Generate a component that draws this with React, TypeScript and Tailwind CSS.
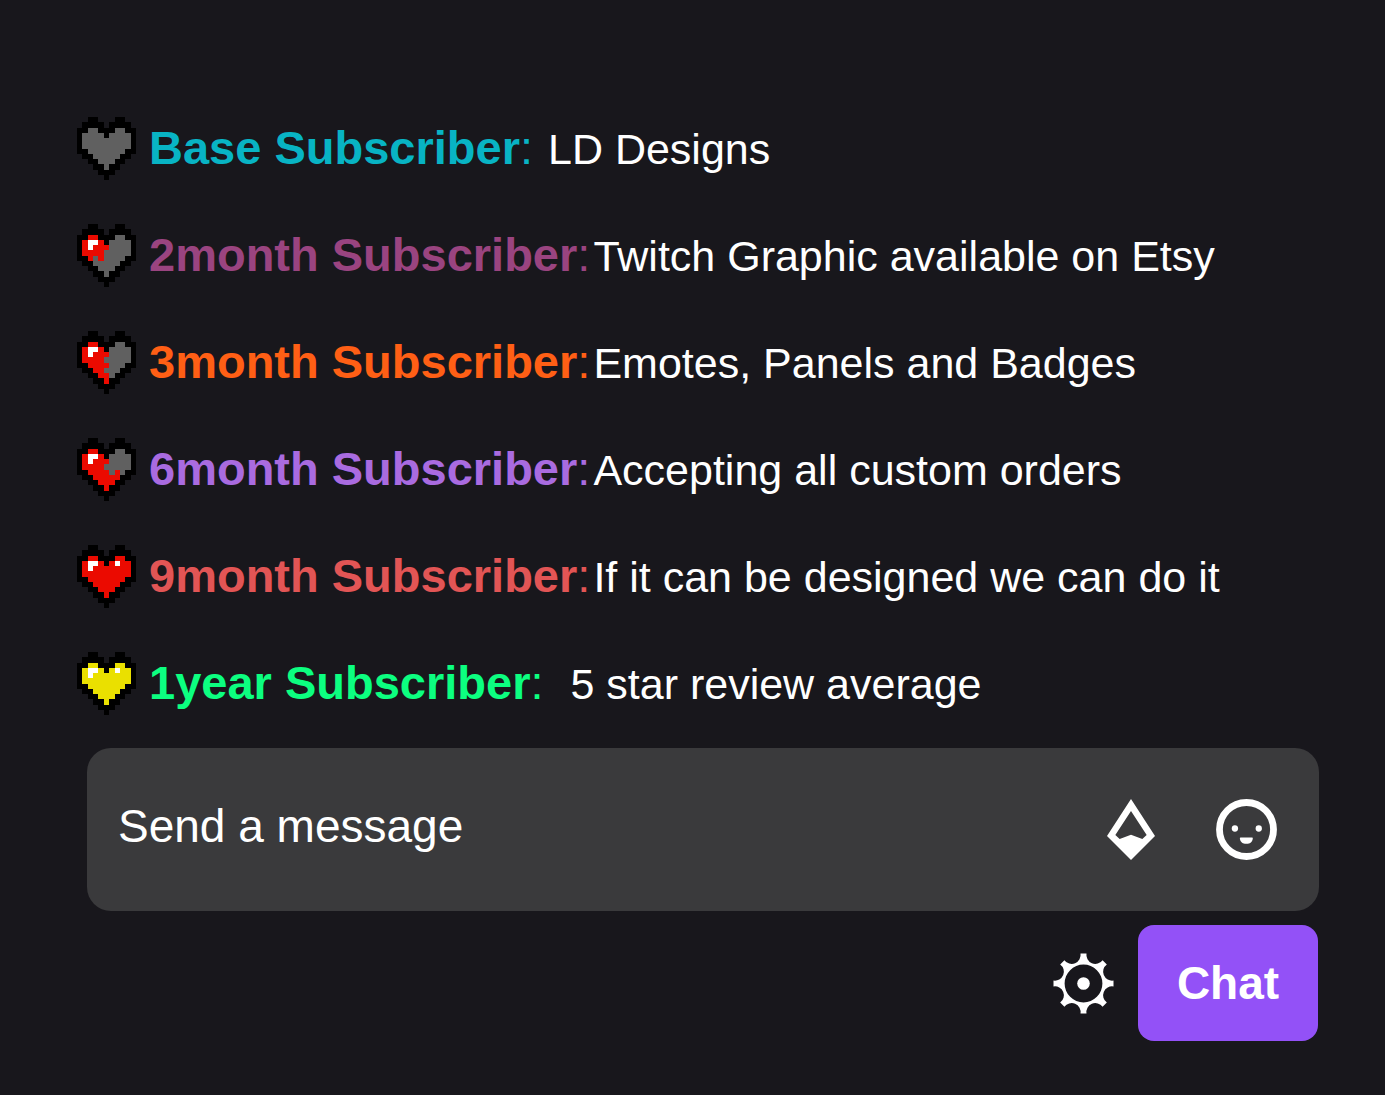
import { useState } from 'react'

interface Message {
  name: string
  nameClass: string
  text: string
  heart: string[]
}

const PIXEL_COLORS: Record<string, string> = {
  '#': '#000000',
  G: '#606060',
  R: '#eb0a00',
  W: '#ffffff',
  Y: '#eae000',
}

const HEART_EMPTY = [
  '..##...##..',
  '.####.####.',
  '##GG###GG##',
  '#GGGG#GGGG#',
  '#GGGGGGGGG#',
  '#GGGGGGGGG#',
  '##GGGGGGG##',
  '.##GGGGG##.',
  '..##GGG##..',
  '...##G##...',
  '....###....',
  '.....#.....',
]

const HEART_QUARTER = [
  '..##...##..',
  '.####.####.',
  '##RR###GG##',
  '#RWWR#GGGG#',
  '#RWRRRGGGG#',
  '#RRRRGGGGG#',
  '##RGRGGGG##',
  '.##GGGGG##.',
  '..##GGG##..',
  '...##G##...',
  '....###....',
  '.....#.....',
]

const HEART_HALF = [
  '..##...##..',
  '.####.####.',
  '##RR###GG##',
  '#RWWR#GGGG#',
  '#RWRRRGGGG#',
  '#RRRRGGGGG#',
  '##RRRRGGG##',
  '.##RRGGG##.',
  '..##RRG##..',
  '...##R##...',
  '....###....',
  '.....#.....',
]

const HEART_MOST = [
  '..##...##..',
  '.####.####.',
  '##RR###GG##',
  '#RWWR#GGGG#',
  '#RWRRRGGGG#',
  '#RRRRGGGGG#',
  '##RRRRGRG##',
  '.##RRRRR##.',
  '..##RRR##..',
  '...##R##...',
  '....###....',
  '.....#.....',
]

const HEART_FULL = [
  '..##...##..',
  '.####.####.',
  '##RR###RR##',
  '#RWWR#RWRR#',
  '#RWRRRRRRR#',
  '#RRRRRRRRR#',
  '##RRRRRRR##',
  '.##RRRRR##.',
  '..##RRR##..',
  '...##R##...',
  '....###....',
  '.....#.....',
]

const HEART_GOLD = HEART_FULL.map(row => row.replace(/R/g, 'Y'))

// leading spaces in text are kept when drawn
const MESSAGES: Message[] = [
  { name: 'Base Subscriber', nameClass: 'text-[#08b4c4]', text: ' LD Designs', heart: HEART_EMPTY },
  { name: '2month Subscriber', nameClass: 'text-[#9a4480]', text: 'Twitch Graphic available on Etsy', heart: HEART_QUARTER },
  { name: '3month Subscriber', nameClass: 'text-[#ff5f15]', text: 'Emotes, Panels and Badges', heart: HEART_HALF },
  { name: '6month Subscriber', nameClass: 'text-[#a96be0]', text: 'Accepting all custom orders', heart: HEART_MOST },
  { name: '9month Subscriber', nameClass: 'text-[#e25555]', text: 'If it can be designed we can do it', heart: HEART_FULL },
  { name: '1year Subscriber', nameClass: 'text-[#0cff80]', text: '  5 star review average', heart: HEART_GOLD },
]

function Heart({ rows }: { rows: string[] }) {
  return (
    <svg
      viewBox="0 0 11 12"
      preserveAspectRatio="none"
      shapeRendering="crispEdges"
      className="w-[59px] h-[63px] shrink-0"
      aria-hidden="true"
    >
      {rows.flatMap((row, y) =>
        row.split('').map((c, x) =>
          c === '.' ? null : <rect key={`${x}-${y}`} x={x} y={y} width={1} height={1} fill={PIXEL_COLORS[c]} />
        )
      )}
    </svg>
  )
}

function BitsIcon() {
  return (
    <svg viewBox="0 0 144 183" className="w-12 h-[61px]" fill="currentColor" fillRule="evenodd" aria-hidden="true">
      <path d="M72 0L144 111L72 183L0 111ZM72 36L25 108L38 120L72 107L106 120L119 108Z" />
    </svg>
  )
}

function SmileIcon() {
  return (
    <svg viewBox="0 0 184 184" className="size-[61px]" fill="currentColor" aria-hidden="true">
      <circle cx="92" cy="92" r="81.5" fill="none" stroke="currentColor" strokeWidth="20.5" />
      <circle cx="57" cy="89" r="9.5" />
      <circle cx="129" cy="89" r="9.5" />
      <path d="M72 118q0-2 2-2h35q2 0 2 2c0 10-7 17-15 17h-9c-8 0-15-7-15-17z" />
    </svg>
  )
}

function GearIcon() {
  return (
    <svg viewBox="-92 -92 184 184" className="size-[61px]" fill="currentColor" fillRule="evenodd" aria-hidden="true">
      <path d="M-9-90.5L9-90.5A27 27 0 0 0 57.6-70.4L70.4-57.6A27 27 0 0 0 90.5-9L90.5 9A27 27 0 0 0 70.4 57.6L57.6 70.4A27 27 0 0 0 9 90.5L-9 90.5A27 27 0 0 0-57.6 70.4L-70.4 57.6A27 27 0 0 0-90.5 9L-90.5-9A27 27 0 0 0-70.4-57.6L-57.6-70.4A27 27 0 0 0-9-90.5ZM57 0A57 57 0 0 0-57 0A57 57 0 0 0 57 0Z" />
      <circle r="19" />
    </svg>
  )
}

export default function App() {
  const [draft, setDraft] = useState('')

  const handleSubmit = (e: React.FormEvent) => {
    e.preventDefault()
    setDraft('')
  }

  return (
    <main className="min-h-screen bg-[#18171c] pt-[117px] pb-[54px] pl-[77px] pr-[66px] font-['Liberation_Sans',Arial,sans-serif] text-white">
      <ul className="flex flex-col gap-11">
        {MESSAGES.map(m => (
          <li key={m.name} className="flex items-center gap-[13px] h-[63px]">
            <Heart rows={m.heart} />
            <p className="text-[47px] leading-[63px] whitespace-pre">
              <span className={m.nameClass}>
                <strong className="font-bold">{m.name}</strong>:
              </span>
              <span className="ml-[3px] text-[43px]">{m.text}</span>
            </p>
          </li>
        ))}
      </ul>

      <form onSubmit={handleSubmit} className="mt-[33px] ml-2.5">
        <div className="flex items-center rounded-3xl bg-[#3a3a3c] h-[163px] pl-[31px] pr-[42px]">
          <input
            type="text"
            aria-label="Send a message"
            placeholder="Send a message"
            value={draft}
            onChange={e => setDraft(e.target.value)}
            className="flex-1 min-w-0 bg-transparent pb-1.5 text-[46px] placeholder:text-white outline-none"
          />
          <div className="flex items-center gap-[61px]">
            <button type="button" aria-label="Bits">
              <BitsIcon />
            </button>
            <button type="button" aria-label="Emotes">
              <SmileIcon />
            </button>
          </div>
        </div>

        <div className="flex items-center justify-end gap-6 mt-3.5 pr-px">
          <button type="button" aria-label="Chat settings">
            <GearIcon />
          </button>
          <button type="submit" className="w-[180px] h-[116px] rounded-2xl bg-[#9351f7] text-[46px] font-bold">
            Chat
          </button>
        </div>
      </form>
    </main>
  )
}
